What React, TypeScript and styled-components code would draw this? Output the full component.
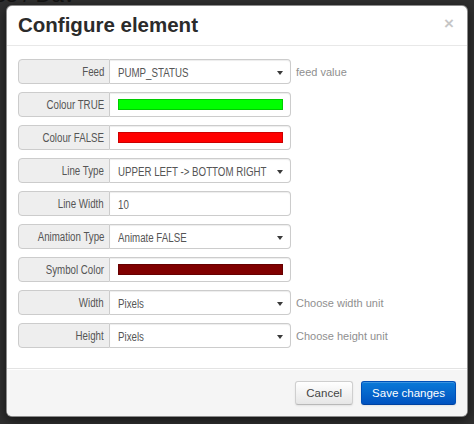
import React from 'react';
import styled, { createGlobalStyle } from 'styled-components';

const Global = createGlobalStyle`
  html, body { margin: 0; padding: 0; background: #2f2f2f; }
  body { font-family: "Liberation Sans", Arial, sans-serif; }
  * { box-sizing: border-box; }
`;

const Backdrop = styled.div`
  position: relative;
  width: 474px;
  height: 424px;
  overflow: hidden;
  background: #303030;
  padding: 5px 6px 7px 6px;
`;

const PageBehind = styled.div`
  position: absolute;
  left: -6px;
  top: -18px;
  font-size: 22px;
  color: #141414;
  white-space: nowrap;
`;

const Modal = styled.div`
  position: relative;
  height: 412px;
  display: flex;
  flex-direction: column;
  background: #fff;
  border: 1px solid rgba(0, 0, 0, 0.45);
  border-radius: 6px;
  box-shadow: 0 3px 12px rgba(0, 0, 0, 0.6);
  overflow: hidden;
`;

const Header = styled.div`
  height: 40px;
  flex: none;
  display: flex;
  align-items: center;
  justify-content: space-between;
  padding: 0 12px 0 11px;
  border-bottom: 1px solid #e8e8e8;
`;

const Title = styled.h4`
  margin: 0;
  font-size: 20.5px;
  font-weight: bold;
  color: #2b2b2b;
  line-height: 1.1;
`;

const Close = styled.button`
  border: 0;
  background: none;
  padding: 0;
  font-family: "Liberation Sans", Arial, sans-serif;
  font-size: 17px;
  font-weight: bold;
  line-height: 1;
  color: #000;
  opacity: 0.22;
  margin-top: -4px;
  margin-right: 1px;
`;

const Body = styled.div`
  flex: 1;
  padding: 13px 11px 12px 11px;
`;

const Row = styled.div`
  display: flex;
  align-items: center;
  height: 25px;
  margin-bottom: 8px;
`;

const Group = styled.div`
  display: flex;
  width: 273px;
  height: 25px;
  flex: none;
`;

const Addon = styled.span`
  width: 92px;
  flex: none;
  display: flex;
  align-items: center;
  justify-content: flex-end;
  padding-right: 5px;
  background: #eee;
  border: 1px solid #ccc;
  border-radius: 4px 0 0 4px;
  color: #555;
  white-space: nowrap;
`;

const Narrow = styled.span<{ $origin: 'left' | 'right' }>`
  display: inline-block;
  font-size: 12px;
  transform: scaleX(0.81);
  transform-origin: ${(p) => p.$origin} center;
`;

const Control = styled.div`
  flex: 1;
  min-width: 0;
  display: flex;
  align-items: center;
  padding: 0 7px 0 8px;
  border: 1px solid #ccc;
  border-left: 0;
  border-radius: 0 4px 4px 0;
  background: #fff;
  box-shadow: inset 0 1px 1px rgba(0, 0, 0, 0.075);
  color: #555;
  white-space: nowrap;
`;

const Value = styled.span`
  flex: 1;
  min-width: 0;
  overflow: hidden;
`;

const Caret = styled.span`
  flex: none;
  width: 0;
  height: 0;
  margin-top: 2px;
  border-left: 3px solid transparent;
  border-right: 3px solid transparent;
  border-top: 4px solid #3a3a3a;
`;

const Swatch = styled.span<{ $color: string }>`
  flex: 1;
  height: 11px;
  background: ${(p) => p.$color};
  border: 1px solid rgba(0, 0, 0, 0.2);
`;

const Help = styled.span`
  margin-left: 5px;
  font-size: 11px;
  color: #8f8f8f;
  white-space: nowrap;
`;

const Footer = styled.div`
  flex: none;
  height: 48px;
  display: flex;
  justify-content: flex-end;
  align-items: flex-start;
  gap: 8px;
  padding: 12px 11px 0 0;
  background: #f5f5f5;
  border-top: 1px solid #e3e3e3;
  box-shadow: inset 0 1px 0 #fff;
`;

const Button = styled.button<{ $primary?: boolean }>`
  height: 24px;
  padding: 0 10px;
  font-family: "Liberation Sans", Arial, sans-serif;
  font-size: 11.5px;
  border-radius: 3px;
  cursor: pointer;
  color: ${(p) => (p.$primary ? '#fff' : '#444')};
  border: 1px solid ${(p) => (p.$primary ? '#0050b8' : '#cfcfcf')};
  border-bottom-color: ${(p) => (p.$primary ? '#0042a0' : '#b8b8b8')};
  background: ${(p) =>
    p.$primary
      ? 'linear-gradient(to bottom, #0a7ad8, #0052c0)'
      : 'linear-gradient(to bottom, #ffffff, #e6e6e6)'};
  box-shadow: inset 0 1px 0 rgba(255, 255, 255, 0.2), 0 1px 2px rgba(0, 0, 0, 0.08);
`;

type Field = {
  label: string;
  kind: 'select' | 'text' | 'color';
  value: string;
  help?: string;
};

const fields: Field[] = [
  { label: 'Feed', kind: 'select', value: 'PUMP_STATUS', help: 'feed value' },
  { label: 'Colour TRUE', kind: 'color', value: '#00ff00' },
  { label: 'Colour FALSE', kind: 'color', value: '#ff0000' },
  { label: 'Line Type', kind: 'select', value: 'UPPER LEFT -> BOTTOM RIGHT' },
  { label: 'Line Width', kind: 'text', value: '10' },
  { label: 'Animation Type', kind: 'select', value: 'Animate FALSE' },
  { label: 'Symbol Color', kind: 'color', value: '#800000' },
  { label: 'Width', kind: 'select', value: 'Pixels', help: 'Choose width unit' },
  { label: 'Height', kind: 'select', value: 'Pixels', help: 'Choose height unit' },
];

export default function App() {
  return (
    <>
      <Global />
      <Backdrop>
        <PageBehind>es / Dav</PageBehind>
        <Modal>
          <Header>
            <Title>Configure element</Title>
            <Close aria-label="Close">×</Close>
          </Header>
          <Body>
            {fields.map((f) => (
              <Row key={f.label}>
                <Group>
                  <Addon>
                    <Narrow $origin="right">{f.label}</Narrow>
                  </Addon>
                  <Control>
                    {f.kind === 'color' ? (
                      <Swatch $color={f.value} />
                    ) : (
                      <Value>
                        <Narrow $origin="left">{f.value}</Narrow>
                      </Value>
                    )}
                    {f.kind === 'select' && <Caret />}
                  </Control>
                </Group>
                {f.help && <Help>{f.help}</Help>}
              </Row>
            ))}
          </Body>
          <Footer>
            <Button>Cancel</Button>
            <Button $primary>Save changes</Button>
          </Footer>
        </Modal>
      </Backdrop>
    </>
  );
}
